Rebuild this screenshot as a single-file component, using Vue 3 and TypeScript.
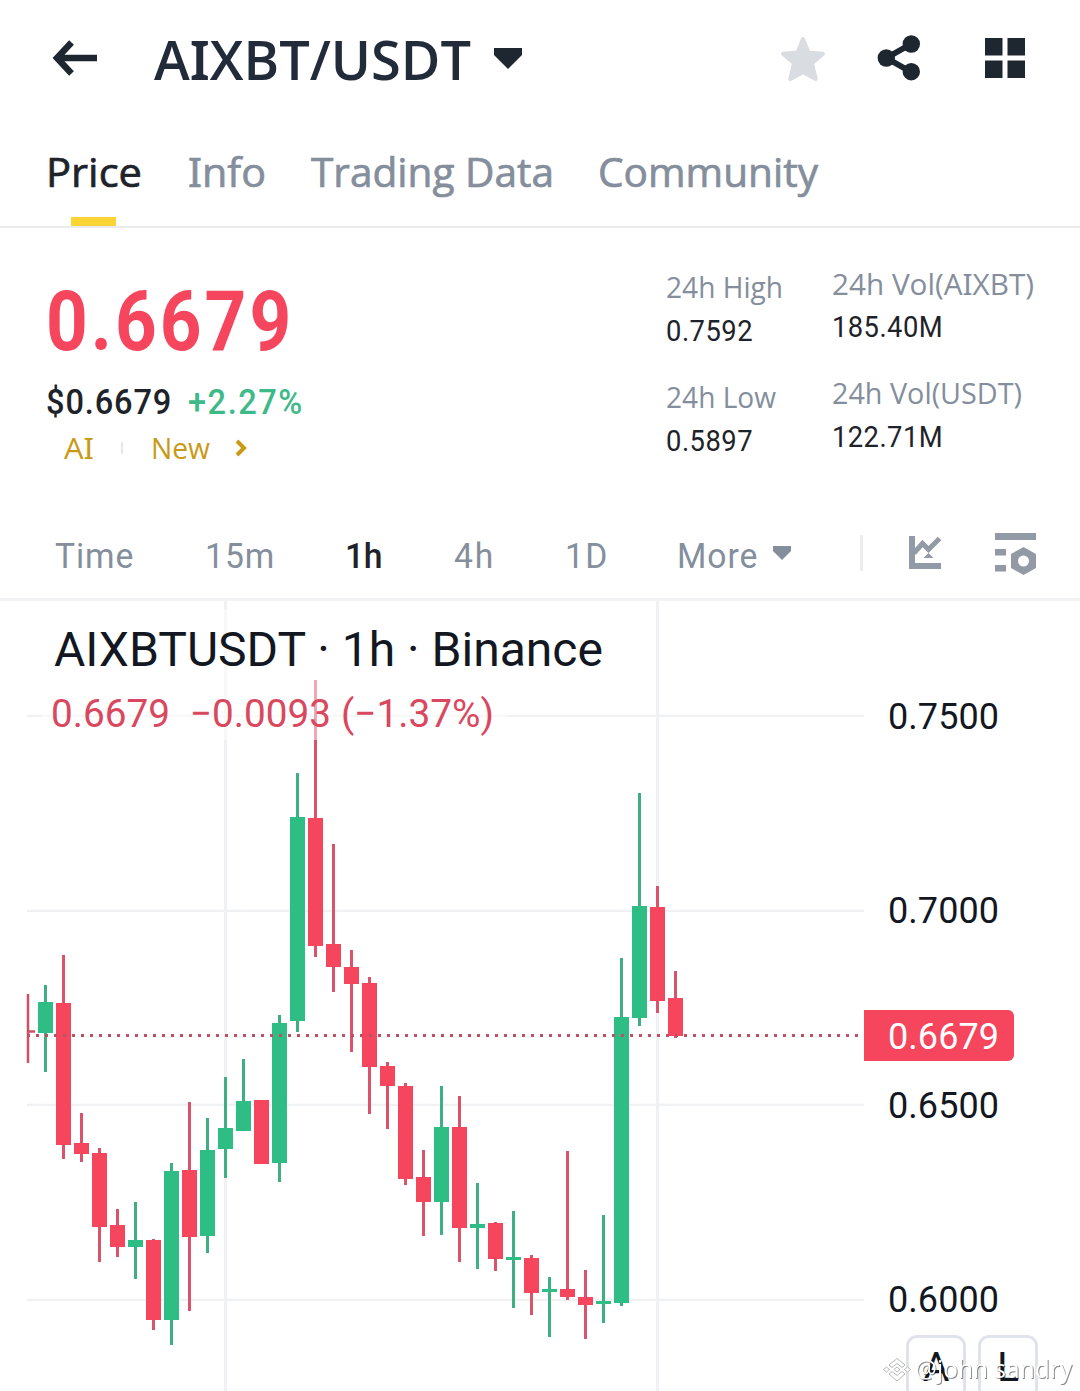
<script setup lang="ts">
import { h, type FunctionalComponent } from 'vue'

// A line of text set to an exact advance width; its box is as tall as the capitals.
// With slab, the capital I is taken from a face that draws it with serifs.
// With squeeze, the glyphs are narrowed and the rest of the width goes between them.
const Fit: FunctionalComponent<{ text: string; w: number; cap: number; slab?: boolean; squeeze?: number }> = (p) => {
  const k = p.squeeze ?? 1
  return h('svg', { width: p.w, height: p.cap, style: { fontSize: `${(p.cap / 0.713).toFixed(2)}px` } }, [
    h(
      'text',
      {
        x: 0,
        y: p.cap,
        textLength: p.squeeze ? (p.w - p.cap * 0.065) / k : p.w,
        lengthAdjust: p.squeeze ? 'spacing' : 'spacingAndGlyphs',
        transform: p.squeeze ? `scale(${k} 1)` : undefined,
      },
      p.slab
        ? p.text.split(/(I)/).filter(Boolean).map((s) => h('tspan', s === 'I' ? { 'font-family': 'Noto Sans' } : {}, s))
        : p.text,
    ),
  ])
}
Fit.props = { text: String, w: Number, cap: Number, slab: Boolean, squeeze: Number } as any

const tabs = [
  { name: 'Price', w: 96, gap: 0 },
  { name: 'Info', w: 78, gap: 45.5 },
  { name: 'Trading Data', w: 243, gap: 45 },
  { name: 'Community', w: 220, gap: 44 },
]

const stats = [
  [
    { label: '24h High', lw: 117, value: '0.7592', vw: 88 },
    { label: '24h Low', lw: 110, value: '0.5897', vw: 88 },
  ],
  [
    { label: '24h Vol(AIXBT)', lw: 202, value: '185.40M', vw: 112 },
    { label: '24h Vol(USDT)', lw: 190, value: '122.71M', vw: 112 },
  ],
]

const frames = [
  { name: 'Time', w: 80, gap: 0 },
  { name: '15m', w: 71, gap: 70 },
  { name: '1h', w: 39, gap: 69 },
  { name: '4h', w: 41, gap: 70 },
  { name: '1D', w: 44, gap: 70 },
  { name: 'More', w: 82, gap: 68 },
]

// [rising, high, low, body top, body bottom] in page pixels
type Candle = [number, number, number, number, number]
const raw: Candle[] = [
  [1, 985, 1072, 1002, 1033], [0, 955, 1159, 1003, 1145], [0, 1113, 1162, 1143, 1154],
  [0, 1148, 1262, 1153, 1227], [0, 1209, 1257, 1225, 1247], [1, 1202, 1279, 1240, 1247],
  [0, 1239, 1330, 1240, 1320], [1, 1163, 1345, 1171, 1320], [0, 1102, 1311, 1170, 1237],
  [1, 1118, 1253, 1150, 1236], [1, 1077, 1178, 1128, 1149], [1, 1059, 1131, 1101, 1131],
  [0, 1100, 1164, 1100, 1164], [1, 1015, 1182, 1023, 1163], [1, 773, 1032, 817, 1021],
  [0, 680, 957, 818, 946], [0, 844, 992, 944, 967], [0, 950, 1052, 967, 984],
  [0, 977, 1114, 983, 1067], [0, 1062, 1129, 1066, 1086], [0, 1083, 1185, 1086, 1179],
  [0, 1150, 1236, 1177, 1202], [1, 1086, 1235, 1127, 1202], [0, 1096, 1262, 1127, 1228],
  [1, 1183, 1269, 1224, 1228], [0, 1222, 1271, 1223, 1259], [1, 1211, 1308, 1257, 1260],
  [0, 1255, 1315, 1258, 1293], [1, 1277, 1337, 1289, 1292], [0, 1151, 1300, 1289, 1297],
  [0, 1270, 1339, 1297, 1305], [1, 1215, 1323, 1301, 1304], [1, 958, 1306, 1017, 1303],
  [1, 793, 1026, 906, 1018], [0, 886, 1013, 907, 1001], [0, 971, 1038, 998, 1036],
]
const candles = raw.map(([up, hi, lo, top, bot], i) => ({ up: !!up, x: 38 + i * 18, hi, lo, top, bot }))

const levels = [
  { label: '0.7500', line: 714.7, base: 729 },
  { label: '0.7000', line: 909.7, base: 923 },
  { label: '0.6500', line: 1103.7, base: 1118 },
  { label: '0.6000', line: 1298.7, base: 1312 },
]
</script>

<template>
  <div class="screen">
    <header class="top">
      <svg class="back" width="46" height="36" viewBox="0 0 46 36">
        <path d="M45 18H6M19.500 2.500L5 18L19.500 33.500" fill="none" stroke="#1e2630" stroke-width="6.500" />
      </svg>
      <Fit class="pair" text="AIXBT/USDT" :w="317" :cap="38.5" slab />
      <svg class="pair-caret" width="28" height="21" viewBox="0 0 28 21">
        <path d="M0 0H28V7L14 21L0 7Z" fill="#1e2630" />
      </svg>
      <svg class="star" width="46" height="46" viewBox="0 0 46 46">
        <path d="M23 3L28.5 16.5L43 17.8L32 27.3L35.7 43L23 36.2L10.3 43L14 27.3L3 17.8L17.5 16.5Z" fill="#d9dce1" stroke="#d9dce1" stroke-width="4" stroke-linejoin="round" />
      </svg>
      <svg class="share" width="44" height="46" viewBox="0 0 44 46">
        <path d="M34 9L9.500 23L34 37" fill="none" stroke="#1e2630" stroke-width="6" />
        <circle cx="34.300" cy="9" r="8.700" fill="#1e2630" />
        <circle cx="9.300" cy="23" r="8.700" fill="#1e2630" />
        <circle cx="34.300" cy="36.700" r="8.700" fill="#1e2630" />
      </svg>
      <svg class="grid" width="40" height="40" viewBox="0 0 40 40">
        <path d="M0 0H17.500V17.500H0ZM22.500 0H40V17.500H22.500ZM0 22.500H17.500V40H0ZM22.500 22.500H40V40H22.500Z" fill="#1e2630" />
      </svg>
    </header>

    <nav class="tabs">
      <div v-for="(t, i) in tabs" :key="t.name" class="tab" :class="{ active: i === 0 }" :style="{ marginLeft: `${t.gap}px` }">
        <Fit class="tab-name" :text="t.name" :w="t.w" :cap="29" slab />
        <span v-if="i === 0" class="underline"></span>
      </div>
    </nav>

    <section class="summary">
      <div class="quote">
        <Fit class="last" text="0.6679" :w="249" :cap="59" :squeeze="0.88" />
        <div class="sub">
          <Fit class="fiat" text="$0.6679" :w="127" :cap="25" :squeeze="0.93" />
          <Fit class="change" text="+2.27%" :w="116" :cap="25" :squeeze="0.93" />
        </div>
        <div class="tags">
          <Fit text="AI" :w="30" :cap="20.5" slab />
          <span class="tag-sep"></span>
          <Fit text="New" :w="59" :cap="20.5" />
          <svg class="more" width="12" height="18" viewBox="0 0 12 18">
            <path d="M2 2L9 9L2 16" fill="none" stroke="#c99a17" stroke-width="4" />
          </svg>
        </div>
      </div>
      <div v-for="(col, c) in stats" :key="c" class="stats" :class="`col${c}`">
        <div v-for="s in col" :key="s.label" class="stat">
          <Fit class="stat-label" :text="s.label" :w="s.lw" :cap="21" slab />
          <Fit class="stat-value" :text="s.value" :w="s.vw" :cap="21" :squeeze="0.93" />
        </div>
      </div>
    </section>

    <div class="toolbar">
      <Fit
        v-for="f in frames"
        :key="f.name"
        class="frame"
        :class="{ on: f.name === '1h' }"
        :text="f.name"
        :w="f.w"
        :cap="25"
        :squeeze="0.96"
        :style="{ marginLeft: `${f.gap}px` }"
      />
      <svg class="more-caret" width="18" height="14" viewBox="0 0 18 14">
        <path d="M0 0H18V5L9 14L0 5Z" fill="#848e9c" />
      </svg>
      <span class="bar"></span>
      <svg class="ico-chart" width="33" height="33" viewBox="0 0 33 33">
        <path d="M0 0H6V27H32V33H0Z" fill="#929aa5" />
        <path d="M5 17L13.500 7.500L19.500 13.500L30.500 2.500" fill="none" stroke="#929aa5" stroke-width="5" />
        <path d="M19.500 17L24.500 22H14.500Z" fill="#929aa5" />
      </svg>
      <svg class="ico-set" width="42" height="43" viewBox="0 0 42 43">
        <path d="M0 0H41V7H0ZM0 16H11V22.500H0ZM0 32H11V38.500H0Z" fill="#929aa5" />
        <path fill-rule="evenodd" d="M28.500 14L41 21V35L28.500 42L16 35V21ZM28.500 22.500A5.500 5.500 0 1 0 28.500 33.500A5.500 5.500 0 1 0 28.500 22.500Z" fill="#929aa5" />
      </svg>
    </div>

    <main class="chart">
      <svg class="plot" width="1080" height="790" viewBox="0 601 1080 790">
        <g fill="#f0f1f2">
          <rect x="224" y="601" width="3" height="790" />
          <rect x="656" y="601" width="3" height="790" />
          <rect v-for="l in levels" :key="l.label" x="27" :y="l.line" width="837" height="2.3" />
        </g>
        <path d="M28 994V1063M28 1031.500H35" stroke="#cf5065" stroke-width="2.500" fill="none" />
        <g v-for="c in candles" :key="c.x">
          <rect :x="c.x + 6" :y="c.hi" width="3" :height="c.lo - c.hi" :fill="c.up ? '#3fae82' : '#d9536a'" />
          <rect :x="c.x" :y="c.top" width="15" :height="c.bot - c.top" :fill="c.up ? '#2ebd85' : '#f6465d'" />
        </g>
        <path d="M27 1035.500H860" stroke="#c14f63" stroke-width="3" stroke-dasharray="3 6" />
        <g class="axis">
          <text v-for="l in levels" :key="l.label" x="888" :y="l.base" textLength="111">{{ l.label }}</text>
        </g>
        <path d="M864 1010H1008a6 6 0 0 1 6 6V1055a6 6 0 0 1 -6 6H864Z" fill="#f6465d" />
        <text class="axis mark" x="888" y="1049" textLength="111">0.6679</text>
      </svg>
      <div class="legend">
        <div class="legend-title"><Fit text="AIXBTUSDT · 1h · Binance" :w="549" :cap="34" /></div>
        <div class="legend-vals">
          <Fit text="0.6679" :w="119" :cap="28" />
          <Fit text="−0.0093" :w="141" :cap="28" />
          <Fit text="(−1.37%)" :w="153" :cap="28" />
        </div>
      </div>
      <div class="scale">
        <span class="key">A</span>
        <span class="key">L</span>
      </div>
      <div class="credit">
        <svg width="28" height="24" viewBox="0 0 28 24">
          <path d="M6 7L14 0.500L22 7L19 9.500L14 5.500L9 9.500ZM0.500 11.500L3.500 9L6.500 11.500L3.500 14ZM21.500 11.500L24.500 9L27.500 11.500L24.500 14ZM11 11.500L14 9L17 11.500L14 14ZM6 16L9 13.500L14 17.500L19 13.500L22 16L14 23Z" fill="#fff" stroke="#b0b0b0" stroke-width="0.900" />
        </svg>
        <Fit class="credit-name" text="@john sandry" :w="157" :cap="18" />
      </div>
    </main>
  </div>
</template>

<style>
body {
  margin: 0;
  background: #fff;
}
</style>

<style scoped>
.screen {
  width: 1080px;
  height: 1391px;
  overflow: hidden;
  background: #fff;
  color: #1e2329;
  font-family: 'Open Sans', 'Noto Sans', sans-serif;
}
svg {
  display: block;
  flex: none;
  overflow: visible;
  fill: currentColor;
}
.top {
  display: flex;
  align-items: center;
  height: 118px;
  padding-left: 52px;
}
.back {
  margin-bottom: 2px;
}
.pair {
  margin-left: 56px;
  margin-top: 2px;
  font-weight: 600;
  color: #222b3a;
}
.pair-caret {
  margin-left: 23px;
  margin-bottom: 1px;
}
.star {
  margin-left: 258px;
  margin-bottom: 1px;
}
.share {
  margin-left: 51px;
  margin-bottom: 2px;
}
.grid {
  margin-left: 64px;
  margin-bottom: 2px;
}
.tabs {
  display: flex;
  height: 108px;
  padding-left: 46px;
  border-bottom: 2px solid #eaebed;
  color: #848e9c;
}
.tab {
  display: flex;
  flex-direction: column;
  align-items: center;
  padding-top: 40px;
}
.tab.active {
  color: #1e2329;
}
.tab-name {
  stroke: currentColor;
  stroke-width: 0.7px;
}
.underline {
  width: 45px;
  height: 9px;
  margin-top: 30px;
  margin-right: 1px;
  background: #fcd535;
}
.summary {
  display: flex;
  height: 286px;
}
.quote {
  box-sizing: border-box;
  width: 665.5px;
  padding: 63px 0 0 46px;
}
.last,
.sub,
.stat-value {
  font-family: Roboto, sans-serif;
}
.last {
  font-weight: 700;
  color: #f6465d;
}
.sub {
  display: flex;
  gap: 15px;
  margin-top: 39px;
  font-weight: 500;
}
.change {
  color: #3dba88;
}
.tags {
  display: flex;
  align-items: center;
  margin: 24px 0 0 18px;
  color: #c99a17;
}
.tag-sep {
  width: 2px;
  height: 12px;
  margin: 0 28px 0 27px;
  background: #e6e8ea;
}
.more {
  margin-left: 25px;
}
.stats {
  display: flex;
  flex-direction: column;
  gap: 46px;
}
.col0 {
  width: 166.5px;
  padding-top: 49px;
}
.col1 {
  gap: 45.5px;
  padding-top: 45.5px;
}
.stat {
  display: flex;
  flex-direction: column;
  gap: 22px;
  height: 64px;
}
.col1 .stat {
  gap: 21.5px;
}
.stat-label {
  color: #848e9c;
}
.toolbar {
  display: flex;
  align-items: center;
  height: 84px;
  padding-left: 55px;
  border-bottom: 3px solid #f2f3f4;
  font-family: Roboto, sans-serif;
  color: #848e9c;
}
.frame {
  margin-top: -2px;
}
.frame.on {
  font-weight: 500;
  color: #1e2329;
}
.more-caret {
  margin: 0 0 7px 14px;
}
.bar {
  width: 3px;
  height: 36px;
  margin-left: 69px;
  margin-bottom: 6px;
  background: #eaecef;
}
.ico-chart {
  margin-left: 46px;
  margin-bottom: 7px;
}
.ico-set {
  margin-left: 52.5px;
  margin-bottom: 3px;
}
.chart {
  position: relative;
  height: 790px;
  font-family: Roboto, sans-serif;
}
.axis {
  font-size: 36px;
  fill: #131722;
}
.axis.mark {
  fill: #fff;
}
.legend {
  position: absolute;
  top: 8px;
  left: 41px;
  color: #131722;
}
.legend-title {
  box-sizing: border-box;
  height: 71px;
  padding: 23px 14px 0 13px;
  background: rgba(255, 255, 255, 0.5);
}
.legend-vals {
  display: flex;
  box-sizing: border-box;
  width: 467px;
  height: 60px;
  padding: 19px 0 0 10px;
  background: rgba(255, 255, 255, 0.5);
  color: #d9485e;
}
.legend-vals svg:nth-child(2) {
  margin-left: 20px;
}
.legend-vals svg:nth-child(3) {
  margin-left: 10px;
}
.scale {
  position: absolute;
  top: 734px;
  left: 906px;
  display: flex;
  gap: 12px;
}
.key {
  box-sizing: border-box;
  width: 60px;
  height: 70px;
  padding-top: 5px;
  border: 3px solid #e0e3eb;
  border-radius: 11px;
  background: #fff;
  color: #131722;
  font-size: 41px;
  line-height: 48px;
  text-align: center;
}
.credit {
  position: absolute;
  top: 757px;
  left: 883px;
  display: flex;
  align-items: center;
  gap: 4px;
  color: #fff;
}
.credit-name {
  margin-bottom: 2px;
  font-family: 'Open Sans', sans-serif;
  filter: drop-shadow(1px 1px 0.5px rgba(0, 0, 0, 0.45));
}
</style>
